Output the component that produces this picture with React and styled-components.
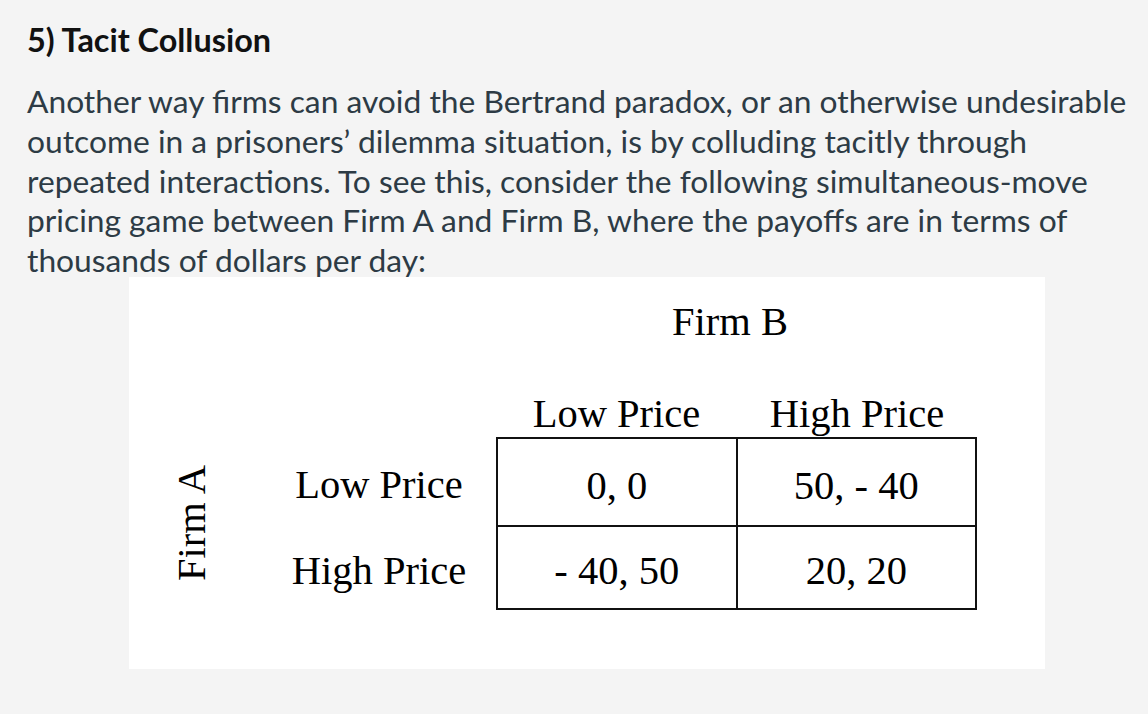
import React from "react";
import styled, { createGlobalStyle } from "styled-components";

const GlobalStyle = createGlobalStyle`
  body {
    margin: 0;
    background: #f4f4f4;
  }
`;

const Page = styled.div`
  padding: 21px 14px 30px 27px;
  font-family: Lato, "Noto Sans", sans-serif;
`;

const Title = styled.h3`
  margin: 0 0 23px;
  font-size: 32.4px;
  line-height: 38px;
  font-weight: 700;
  color: #111;
`;

const Text = styled.p`
  margin: 0 0 -4px;
  font-size: 31.75px;
  line-height: 39.75px;
  color: #2d3b45;
`;

const Figure = styled.div`
  box-sizing: border-box;
  width: 916px;
  height: 392px;
  margin-left: 102px;
  padding-top: 22px;
  background: #fff;
`;

const Matrix = styled.div`
  display: grid;
  grid-template-columns: 133px 234px 241px 240px;
  grid-template-rows: auto auto 88px 85px;
  font-family: "Liberation Serif", "Times New Roman", serif;
  font-size: 40.5px;
  line-height: 46px;
  color: #000;
`;

const PlayerTop = styled.div`
  grid-column: 3 / 5;
  grid-row: 1;
  margin-bottom: 46px;
  padding-right: 13px;
  text-align: center;
`;

const PlayerSide = styled.div`
  grid-column: 1;
  grid-row: 3 / 5;
  display: flex;
  align-items: center;
  justify-content: center;
  padding-right: 8px;
`;

const Sideways = styled.span`
  writing-mode: vertical-rl;
  transform: rotate(180deg);
`;

const ColHead = styled.div`
  grid-column: ${(p) => p.col};
  grid-row: 2;
  text-align: center;
`;

const RowHead = styled.div`
  grid-column: 2;
  grid-row: ${(p) => p.row};
  display: flex;
  align-items: center;
  justify-content: center;
  padding-top: 8px;
`;

const Payoffs = styled.div`
  grid-column: 3 / 5;
  grid-row: 3 / 5;
  display: grid;
  grid-template-columns: 1fr 1fr;
  grid-template-rows: 86px 81px;
  gap: 2px;
  border: 2px solid #111;
  background: #111;
`;

const Cell = styled.div`
  display: flex;
  align-items: center;
  justify-content: center;
  padding-top: 8px;
  background: #fff;
`;

const strategies = ["Low Price", "High Price"];
const payoffs = ["0, 0", "50, - 40", "- 40, 50", "20, 20"];

function App() {
  return (
    <Page>
      <GlobalStyle />
      <Title>5) Tacit Collusion</Title>
      <Text>
        Another way firms can avoid the Bertrand paradox, or an otherwise undesirable
        outcome in a prisoners’ dilemma situation, is by colluding tacitly through
        repeated interactions. To see this, consider the following simultaneous-move
        pricing game between Firm A and Firm B, where the payoffs are in terms of
        thousands of dollars per day:
      </Text>
      <Figure>
        <Matrix>
          <PlayerTop>Firm B</PlayerTop>
          {strategies.map((s, i) => (
            <ColHead key={s} col={i + 3}>
              {s}
            </ColHead>
          ))}
          <PlayerSide>
            <Sideways>Firm A</Sideways>
          </PlayerSide>
          {strategies.map((s, i) => (
            <RowHead key={s} row={i + 3}>
              {s}
            </RowHead>
          ))}
          <Payoffs>
            {payoffs.map((v) => (
              <Cell key={v}>{v}</Cell>
            ))}
          </Payoffs>
        </Matrix>
      </Figure>
    </Page>
  );
}

export default App;
